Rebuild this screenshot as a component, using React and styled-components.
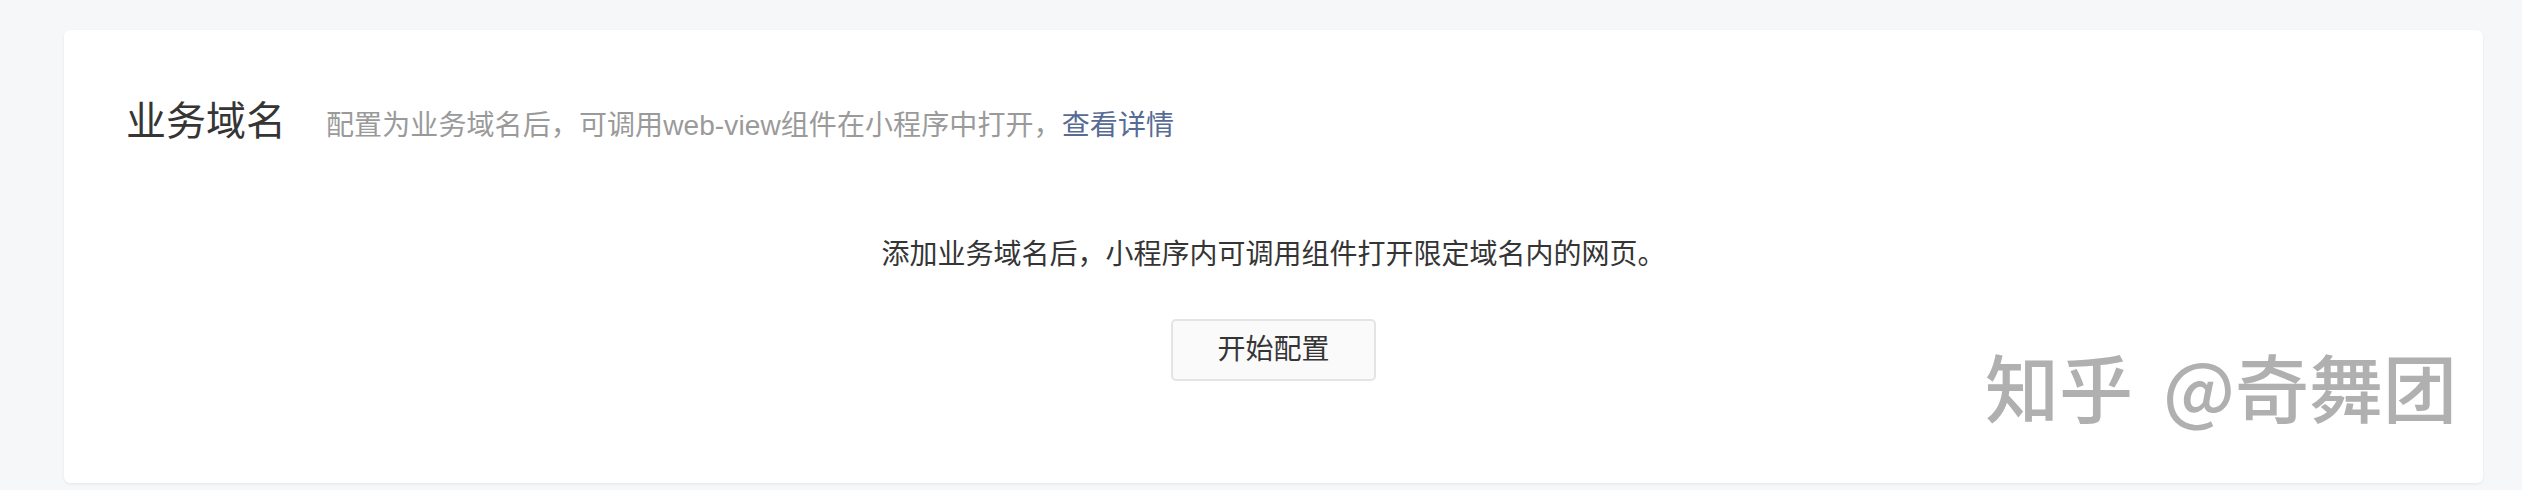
import React from "react";
import styled, { createGlobalStyle } from "styled-components";

const Global = createGlobalStyle`
  html, body {
    margin: 0;
    padding: 0;
    background: #f6f7f9;
  }
  body {
    font-family: "Liberation Sans", "Noto Sans CJK SC", sans-serif;
    -webkit-font-smoothing: antialiased;
  }
`;

const Page = styled.div`
  width: 2522px;
  height: 490px;
  box-sizing: border-box;
  padding: 30px 39px 0 64px;
  background: #f6f7f9;
  overflow: hidden;
`;

const Card = styled.section`
  position: relative;
  height: 453px;
  box-sizing: border-box;
  background: #ffffff;
  border-radius: 6px;
  box-shadow: 0 1px 3px rgba(0, 0, 0, 0.07);
  padding: 63px 62px 0 62px;
  display: flex;
  flex-direction: column;
`;

const Header = styled.div`
  display: flex;
  align-items: baseline;
  gap: 40px;
`;

const Title = styled.h2`
  margin: 0;
  font-size: 40px;
  line-height: 56px;
  font-weight: 400;
  color: #353535;
`;

const Desc = styled.p`
  margin: 0;
  font-size: 28px;
  line-height: 40px;
  letter-spacing: 0.1px;
  color: #9a9a9a;
`;

const Link = styled.a`
  color: #576b95;
  text-decoration: none;
`;

const Empty = styled.div`
  display: flex;
  flex-direction: column;
  align-items: center;
  margin-top: 86px;
  gap: 44px;
`;

const Message = styled.p`
  margin: 0;
  font-size: 28px;
  line-height: 40px;
  color: #353535;
`;

const Button = styled.button`
  height: 62px;
  padding: 0 44px;
  box-sizing: border-box;
  border: 2px solid #e4e4e4;
  border-radius: 5px;
  background: #fafafa;
  color: #353535;
  font-family: inherit;
  font-size: 28px;
  line-height: 58px;
  cursor: pointer;
`;

const Watermark = styled.div`
  position: absolute;
  right: 26px;
  top: 318px;
  display: flex;
  align-items: baseline;
  gap: 30px;
  font-family: "Noto Sans CJK SC", sans-serif;
  font-size: 74px;
  line-height: 1;
  font-weight: 500;
  color: #b0b0b0;
  pointer-events: none;
  white-space: nowrap;
`;

export default function App() {
  return (
    <>
      <Global />
      <Page>
        <Card>
          <Header>
            <Title>业务域名</Title>
            <Desc>
              配置为业务域名后，可调用web-view组件在小程序中打开，
              <Link href="#">查看详情</Link>
            </Desc>
          </Header>
          <Empty>
            <Message>添加业务域名后，小程序内可调用组件打开限定域名内的网页。</Message>
            <Button>开始配置</Button>
          </Empty>
          <Watermark>
            <span>知乎</span>
            <span>@奇舞团</span>
          </Watermark>
        </Card>
      </Page>
    </>
  );
}
